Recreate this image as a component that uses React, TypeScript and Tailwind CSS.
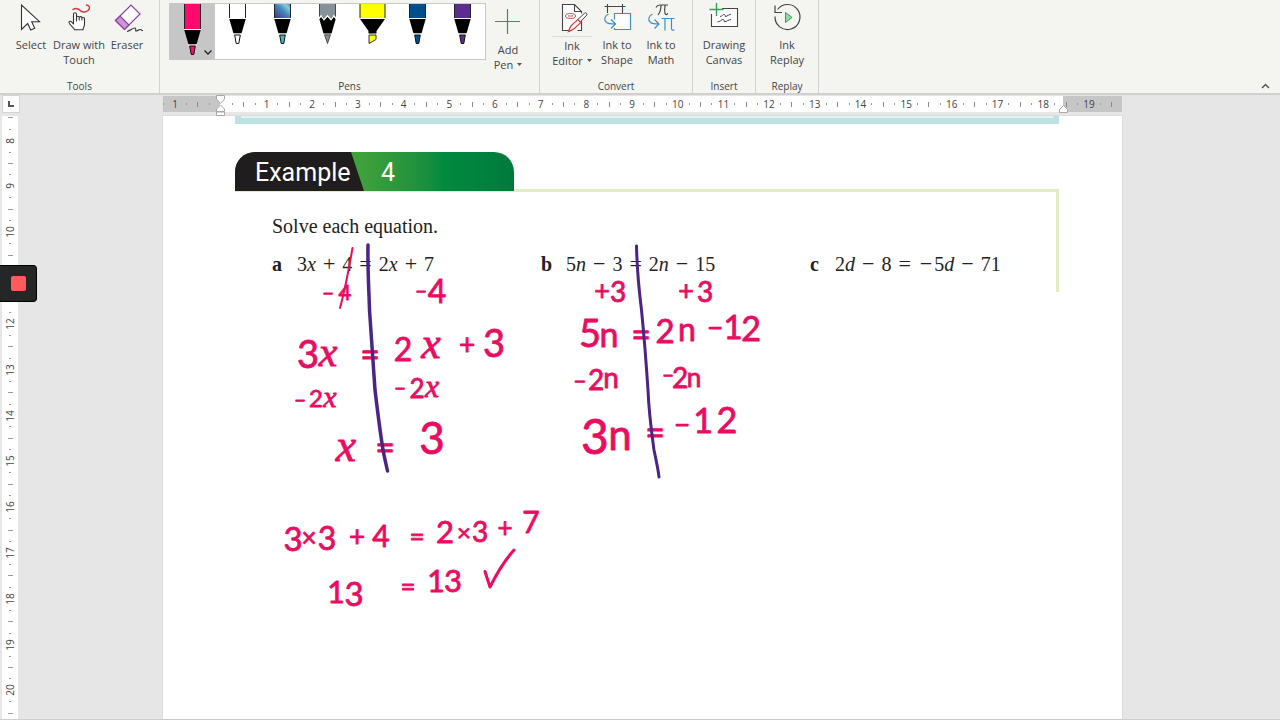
import type { ReactNode } from 'react';
import { clsx } from 'clsx';

const INK = '#e90c61';
const PURPLE = '#4b2488';

type Pen = {
  name: string;
  color: string;
  kind: 'pen' | 'pencil' | 'highlighter';
  selected?: boolean;
};

const pens: Pen[] = [
  { name: 'Pink pen', color: '#ff0a6c', kind: 'pen', selected: true },
  { name: 'White pen', color: '#ffffff', kind: 'pen' },
  { name: 'Galaxy pen', color: 'url(#galaxy)', kind: 'pen' },
  { name: 'Pencil', color: '#869297', kind: 'pencil' },
  { name: 'Highlighter', color: '#ffff00', kind: 'highlighter' },
  { name: 'Blue pen', color: '#004f8b', kind: 'pen' },
  { name: 'Purple pen', color: '#5b2d90', kind: 'pen' },
];

function PenDrawing({ pen }: { pen: Pen }) {
  const drop = pen.selected ? 11 : 0;
  return (
    <svg width="45" height="55" viewBox="0 0 45 55" aria-hidden="true">
      <defs>
        <linearGradient id="galaxy" x1="0" y1="1" x2="1" y2="0">
          <stop offset="0" stopColor="#3b3480" />
          <stop offset="0.5" stopColor="#4b86bd" />
          <stop offset="0.75" stopColor="#7fd0d8" />
          <stop offset="1" stopColor="#6a4a9c" />
        </linearGradient>
      </defs>
      {pen.kind === 'pen' && (
        <>
          <rect x="14" y="-2" width="17" height={16 + drop} fill={pen.color} />
          <path d={`M14.5 0V${14 + drop}M30.5 0V${14 + drop}`} stroke="#222" strokeWidth="1" />
          <g transform={`translate(0 ${drop})`}>
            <path d="M14 14.5h17" stroke="#fff" strokeWidth="1" />
            <path d="M14.3 15h16.4L26.5 29.5h-8z" fill="#000" />
            <path d="M18 30h9" stroke="#fff" strokeWidth="1" />
            <path
              d="M19.7 31h5.6l-1.5 8.5h-2.6z"
              fill={pen.color === 'url(#galaxy)' ? '#4fb0c0' : pen.color}
              stroke="#111"
              strokeWidth="1"
            />
          </g>
          {pen.selected && <path d="M34.5 46.5l3.5 3.5 3.5-3.5" fill="none" stroke="#222" strokeWidth="1.3" />}
        </>
      )}
      {pen.kind === 'pencil' && (
        <>
          <path d="M14 0h17v14l-4.5 15.5h-8L14 14z" fill="#000" />
          <path d="M14.5 0h16v15l-2.6-3-2.7 3.5-2.7-3.5-2.7 3.5-2.7-3.5-2.6 3z" fill="#869297" />
          <path d="M13.5 15l2.6-3.2 2.9 4 3.5-4 3.5 4 2.9-4 2.6 3.2" fill="none" stroke="#fff" strokeWidth="1.3" />
          <path d="M19.5 30.8h6l-3 8.7z" fill="#8d8d8d" stroke="#333" strokeWidth="0.8" />
        </>
      )}
      {pen.kind === 'highlighter' && (
        <>
          <rect x="10" y="-2" width="25" height="16" fill="#ff0" />
          <path d="M10 0v14M35 0v14" stroke="#222" strokeWidth="1" />
          <path d="M10 15h25l-8.5 12v2.500h-8V27z" fill="#000" />
          <path d="M19 31h7v4.500l-7 4z" fill="#ff0" stroke="#222" strokeWidth="0.9" />
        </>
      )}
    </svg>
  );
}

function RibbonGroup({ label, className, children }: { label: string; className?: string; children: ReactNode }) {
  return (
    <section aria-label={label} className="flex shrink-0 flex-col justify-between border-r border-[#d2d2d0]">
      <div className={clsx('flex items-start', className)}>{children}</div>
      <p className="text-center text-[10px] leading-[14px] text-[#444]">{label}</p>
    </section>
  );
}

function RibbonButton({ lines, menu, className, children }: { lines: string[]; menu?: boolean; className?: string; children: ReactNode }) {
  return (
    <button type="button" className={clsx('flex shrink-0 flex-col items-center text-[11px] leading-[15px] text-[#444]', className)}>
      {children}
      {lines.map((line, i) => (
        <span key={line} className="flex items-center gap-1 whitespace-nowrap">
          {line}
          {menu && i === lines.length - 1 && (
            <svg width="5" height="3" viewBox="0 0 5 3" aria-hidden="true">
              <path d="M0 0h5L2.5 3z" fill="#555" />
            </svg>
          )}
        </span>
      ))}
    </button>
  );
}

function SelectIcon() {
  return (
    <svg width="48" height="37" viewBox="7 0 48 37" fill="none" aria-hidden="true">
      <path d="M21.5 5v24.500l6.200-6 3 6.500 4-1.800-3-6.500h7.800z" fill="#fff" stroke="#333" strokeWidth="1.1" />
    </svg>
  );
}

function TouchIcon() {
  return (
    <svg width="48" height="37" viewBox="55 0 48 37" fill="none" strokeLinecap="round" strokeLinejoin="round" aria-hidden="true">
      <path d="M73 9.500c3-2 5-1 7 .8 2.500 2 5.500 2.200 8 .2 2.500-2.200 2-5-1.500-5.500" stroke="#d8363b" strokeWidth="1.5" />
      <path
        d="M73.500 24V14.500c0-2.300 3-2.300 3 0V21v-3.500c0-1.700 2.700-1.700 2.700 0V20v-2.200c0-1.700 2.700-1.500 2.700.2V20v-1.500c0-1.500 2.600-1.500 2.600.5v5.500c0 2-1.500 3-1.500 5.300h-8.500c0-2-5-4.500-5.500-7.300-.2-1.400 1.700-1.800 2.600-.6z"
        fill="#fff"
        stroke="#333"
        strokeWidth="1.1"
      />
    </svg>
  );
}

function EraserIcon() {
  return (
    <svg width="48" height="37" viewBox="103 0 48 37" fill="none" aria-hidden="true">
      <path d="M115.500 20.500L131 5l9 9-15.500 15.500z" fill="#fff" stroke="#8a3f9e" strokeWidth="1.2" />
      <path d="M115.500 20.500l4.500-4.500 9 9-4.500 4.500z" fill="#cf94d8" stroke="#8a3f9e" strokeWidth="1.2" />
      <path d="M127 31.500c3-.5 6-4 8-3.500s-.5 3.300 1.500 3 2.500-2 4-1.500 1 1 2.500 1" stroke="#333" strokeWidth="1.1" />
    </svg>
  );
}

function PlusIcon() {
  return (
    <svg width="44" height="42" viewBox="0 0 44 42" aria-hidden="true">
      <path d="M21.500 9v25M9 21.500h25" stroke="#3c8f5c" strokeWidth="1.2" />
    </svg>
  );
}

function InkEditorIcon() {
  return (
    <svg width="44" height="36" viewBox="550 0 44 36" fill="none" aria-hidden="true">
      <path d="M562.500 4.500h12l7 7v19h-19z" fill="#fff" />
      <path d="M569 30.500h-6.500v-26h12l7 7v2M574.500 4.500v7h7M581.500 21v9.500h-4" stroke="#444" strokeWidth="1.1" />
      <ellipse cx="570.5" cy="16" rx="5" ry="2.5" stroke="#d94a4a" />
      <path d="M568 16h5" stroke="#d94a4a" />
      <path d="M568.500 31.500l2.300-5.500 14-13c1-.7 2.800.8 2 2l-13 14z" fill="#fff" stroke="#444" />
      <path d="M568.500 31.500l2.300-5.500 7-6.500 3 3-7 6.500z" fill="#fff" stroke="#e03b3b" strokeWidth="1.2" />
    </svg>
  );
}

function InkShapeIcon() {
  return (
    <svg width="44" height="37" viewBox="595 0 44 37" fill="none" aria-hidden="true">
      <path d="M607.500 4v9M622.500 4v9M604.500 6.500h21" stroke="#444" strokeWidth="1.1" />
      <path d="M614.500 13.500h16v16h-16V20z" fill="#fff" />
      <path d="M614.500 19.500v-6h16v16h-16v-1.500" stroke="#3d8fc9" strokeWidth="1.2" />
      <path d="M608.500 14c-4 2-5 6-2 8.500 2 1.500 5 1.500 9 1.500M611 19.500l4.500 4.500-4.500 4.500" stroke="#3d8fc9" strokeWidth="1.2" />
    </svg>
  );
}

function InkMathIcon() {
  return (
    <svg width="44" height="37" viewBox="639 0 44 37" fill="none" aria-hidden="true">
      <path d="M656 7.500c1-2 2-2.500 4-2.500h8M661 5.500c0 4-1 7-3 9.500M665 5.500c-.5 5-1 8.500 1 9 .8.200 1.500-.500 1.800-1.200" stroke="#444" strokeWidth="1.2" />
      <path d="M652.500 14c-4 2-5 6-2 8.500 2 1.500 4 1.500 8 1.500M654.500 19.500L659 24l-4.500 4.500" stroke="#3d8fc9" strokeWidth="1.2" />
      <path d="M661.500 18.500h13M665 18.500v12M671.500 18.500v10c0 1.500 1 2 3 1.500" stroke="#3d8fc9" strokeWidth="1.2" />
    </svg>
  );
}

function CanvasIcon() {
  return (
    <svg width="62" height="37" viewBox="693 0 62 37" fill="none" aria-hidden="true">
      <path d="M711.500 8.500h26v18h-26z" fill="#fff" />
      <path d="M722 8.500h15.500v18h-26V14" stroke="#444" strokeWidth="1.1" />
      <path d="M716.500 3v13M709.500 9.500h14" stroke="#35a055" strokeWidth="1.4" />
      <path d="M720 16.500c2 0 3-2.500 4.500-2s0 2.500 1.500 2 3-2 5-2.500M717.500 22c2 0 4.500-3 6-2.500s-.5 2.500 1.500 2.200 3.500-2 6-2.200" stroke="#444" />
    </svg>
  );
}

function ReplayIcon() {
  return (
    <svg width="62" height="37" viewBox="756 0 62 37" fill="none" aria-hidden="true">
      <path d="M777.500 9.500a12.500 12.500 0 1 1-2.500 7" stroke="#444" strokeWidth="1.2" />
      <path d="M775 5.500v7h7" stroke="#444" strokeWidth="1.2" />
      <path d="M785.500 12.500l6.500 5-6.500 5z" fill="#8fdca8" stroke="#35a055" />
    </svg>
  );
}

function Ribbon() {
  return (
    <header className="flex h-[95px] shrink-0 overflow-hidden border-b-2 border-[#d0d0ce] bg-[#f4f5f1]">
      <RibbonGroup label="Tools" className="pl-[7px] pr-2">
        <RibbonButton lines={['Select']} className="w-12"><SelectIcon /></RibbonButton>
        <RibbonButton lines={['Draw with', 'Touch']} className="w-12"><TouchIcon /></RibbonButton>
        <RibbonButton lines={['Eraser']} className="w-12"><EraserIcon /></RibbonButton>
      </RibbonGroup>
      <RibbonGroup label="Pens" className="px-[9px]">
        <div className="mt-[3px] flex border border-[#c8c8c8] bg-white">
          {pens.map((pen) => (
            <button key={pen.name} type="button" aria-label={pen.name} className={clsx(pen.selected && 'bg-[#c6c6c6]')}>
              <PenDrawing pen={pen} />
            </button>
          ))}
        </div>
        <RibbonButton lines={['Add', 'Pen']} menu className="w-11"><PlusIcon /></RibbonButton>
      </RibbonGroup>
      <RibbonGroup label="Convert" className="pl-[10px] pr-[9px]">
        <RibbonButton lines={['Ink', 'Editor']} menu className="mr-px w-11">
          <InkEditorIcon />
          <span className="mb-px h-px w-10 bg-[#dcdcda]" />
        </RibbonButton>
        <RibbonButton lines={['Ink to', 'Shape']} className="w-11"><InkShapeIcon /></RibbonButton>
        <RibbonButton lines={['Ink to', 'Math']} className="w-11"><InkMathIcon /></RibbonButton>
      </RibbonGroup>
      <RibbonGroup label="Insert">
        <RibbonButton lines={['Drawing', 'Canvas']}><CanvasIcon /></RibbonButton>
      </RibbonGroup>
      <RibbonGroup label="Replay">
        <RibbonButton lines={['Ink', 'Replay']}><ReplayIcon /></RibbonButton>
      </RibbonGroup>
      <button type="button" aria-label="Collapse the ribbon" className="mb-0.5 ml-auto mr-2 self-end p-0.5">
        <svg width="9" height="6" viewBox="0 0 9 6" fill="none" aria-hidden="true">
          <path d="M1 5l3.500-3.500L8 5" stroke="#555" strokeWidth="1.5" />
        </svg>
      </button>
    </header>
  );
}

function HorizontalRuler() {
  const slots = Array.from({ length: 85 }, (_, i) => i);
  return (
    <div className="relative h-4 w-full bg-white">
      <div className="absolute inset-y-0 left-0 w-[57px] bg-[#c6c6c6]" />
      <div className="absolute inset-y-0 right-0 w-[59px] bg-[#c6c6c6]" />
      <div className="relative h-full overflow-hidden">
        <div className="-ml-[5px] -mr-[7px] flex h-full items-center">
          {slots.map((i) => (
            <div key={i} className="flex min-w-0 flex-1 justify-center">
              {i % 4 === 1 && i !== 5 && <span className="text-[10px] leading-4 text-[#444]">{Math.abs((i - 5) / 4)}</span>}
              {i % 4 === 3 && <span className="h-[5px] w-px bg-[#8a8a8a]" />}
              {i % 2 === 0 && <span className="h-0.5 w-px bg-[#9a9a9a]" />}
            </div>
          ))}
        </div>
      </div>
      <svg className="absolute -top-px left-[53px]" width="9" height="22" viewBox="0 0 9 22" fill="#fff" stroke="#a8a8a8" aria-hidden="true">
        <path d="M.5.5h8v3.500l-4 4.500-4-4.500z" />
        <path d="M4.500 10l4 4v2.500h-8V14zM.5 17h8v3.500h-8z" />
      </svg>
      <svg className="absolute right-[54px] top-[9px]" width="9" height="8" viewBox="0 0 9 8" fill="#fff" stroke="#a8a8a8" aria-hidden="true">
        <path d="M4.500.5l4 4v3h-8v-3z" />
      </svg>
    </div>
  );
}

function VerticalRuler() {
  const slots = Array.from({ length: 53 }, (_, i) => i);
  return (
    <div className="flex w-6 shrink-0 flex-col pl-0.5">
      <button type="button" aria-label="Tab selector" className="flex h-[18px] w-[18px] items-center justify-center border border-[#d4d4d4] bg-[#fdfdfd]">
        <span className="h-[6px] w-[6px] border-b-2 border-l-2 border-[#555]" />
      </button>
      <div className="mt-[3px] min-h-0 w-4 flex-1 overflow-hidden bg-white">
        <div className="-mt-1 flex h-[calc(100%+4px)] flex-col">
          {slots.map((i) => (
            <div key={i} className="flex min-h-0 flex-1 items-center justify-center">
              {i % 4 === 0 && <span className="h-px w-[5px] bg-[#9a9a9a]" />}
              {i % 4 === 2 && <span className="-rotate-90 text-[10px] leading-4 text-[#444]">{8 + (i - 2) / 4}</span>}
              {i % 2 === 1 && <span className="h-px w-0.5 bg-[#9a9a9a]" />}
            </div>
          ))}
        </div>
      </div>
    </div>
  );
}

type Mark = [text: string, x: number, y: number, size: number];

// Each mark is [text, centre x, baseline y, size]
const marks: Mark[] = [
  ['−', 328, 300, 20], ['4', 345, 300, 22],
  ['−', 421, 298, 20], ['4', 437, 303, 32],
  ['3', 308, 368, 38], ['x', 328, 366, 42], ['=', 370, 367, 34],
  ['2', 403, 361, 32], ['x', 431, 358, 44], ['+', 467, 355, 28], ['3', 494, 357, 38],
  ['−', 300, 407, 20], ['2', 316, 407, 24], ['x', 330, 407, 30],
  ['−', 400, 395, 20], ['2', 417, 398, 26], ['x', 432, 397, 32],
  ['x', 346, 461, 46], ['=', 385, 460, 34], ['3', 432, 454, 44],
  ['+', 602, 300, 27], ['3', 618, 302, 28],
  ['+', 686, 300, 27], ['3', 705, 302, 28],
  ['5', 590, 347, 38], ['n', 609, 347, 34], ['=', 641, 347, 34],
  ['2', 665, 343, 33], ['n', 687, 341, 32], ['−', 715, 338, 28], ['1', 733, 339, 33], ['2', 751, 341, 34],
  ['−', 580, 389, 22], ['2', 596, 390, 28], ['n', 611, 388, 28],
  ['−', 668, 382, 20], ['2', 680, 388, 28], ['n', 694, 387, 26],
  ['3', 595, 454, 48], ['n', 620, 450, 42], ['=', 655, 445, 34],
  ['−', 682, 435, 28], ['1', 703, 433, 34], ['2', 727, 433, 36],
  ['3', 293, 551, 33], ['×', 309, 547, 26], ['3', 327, 550, 32], ['+', 357, 547, 28], ['4', 381, 547, 30],
  ['=', 417, 546, 26], ['2', 445, 543, 31], ['×', 464, 541, 24], ['3', 480, 542, 28], ['+', 505, 537, 26], ['7', 531, 533, 30],
  ['1', 336, 603, 30], ['3', 354, 606, 33], ['=', 408, 596, 26], ['1', 436, 592, 30], ['3', 453, 592, 31],
];

function InkLayer() {
  return (
    <svg className="pointer-events-none absolute left-0 top-0" width="959" height="600" viewBox="163 116 959 600" fill="none" strokeLinecap="round" strokeLinejoin="round">
      <g fill={INK} stroke={INK} strokeWidth="0.8" textAnchor="middle">
        {marks.map(([text, x, y, size]) => (
          <text
            key={`${x}-${y}`}
            x={x}
            y={y}
            fontSize={size}
            className={text === 'x' ? "font-['Liberation_Serif',serif] italic" : 'font-[Lato,sans-serif]'}
          >
            {text}
          </text>
        ))}
      </g>
      <path d="M352.500 248C350 262 348 274 345 287C343 296 342 301 340 308" stroke={INK} strokeWidth="2" />
      <path d="M485 571.500L490 587C497 573 505 560 514 550" stroke={INK} strokeWidth="3" />
      <path d="M368 245C367.500 270 369 290 369.500 310C371 335 373 360 375 390C378 415 381 440 384 455L387.500 471" stroke={PURPLE} strokeWidth="3.5" />
      <path d="M636.500 246C637 270 639 290 641.500 310C644 335 646 360 648 390C649 415 652 435 654 450C656 460 658 468 659 477" stroke={PURPLE} strokeWidth="3" />
    </svg>
  );
}

function Op({ children }: { children: string }) {
  return <span className="px-0.5 text-[22px] leading-none">{children}</span>;
}

function Question({ letter, children }: { letter: string; children: ReactNode }) {
  return (
    <li className="flex items-baseline whitespace-nowrap">
      <b className="w-[25px] shrink-0">{letter}</b>
      <span>{children}</span>
    </li>
  );
}

function DocumentPage() {
  return (
    <article className="relative min-h-0 w-full flex-1 overflow-hidden bg-white pl-[72px] pr-[63px] shadow-[0_0_1px_#aaa]">
      <div className="h-2 border-x-[6px] border-b-[6px] border-[#bde3e1] bg-[#e3f3f2]" />
      <div className="relative mt-7 flex h-[39px] w-[279px] overflow-hidden rounded-tl-[20px] rounded-tr-[20px] bg-linear-to-r from-[#3fa13a] from-45% via-[#008a3f] via-75% to-[#007a3c] font-[Roboto,sans-serif] text-[25px] leading-[42px] text-white">
        <h2 className="w-[129px] bg-[#1f1d1d] pl-5 [clip-path:polygon(0_0,116px_0,100%_100%,0_100%)]">Example</h2>
        <span className="pl-[17px]">4</span>
      </div>
      <div className="-mt-0.5 h-[103px] border-r-3 border-t-3 border-[#e1edc3] pl-[37px] pt-[22px] font-['Liberation_Serif',serif] text-[20px] leading-6 text-[#222]">
        <p>Solve each equation.</p>
        <ol className="-mr-[23px] mt-[14px] grid grid-cols-3">
          <Question letter="a">3<i>x</i> <Op>+</Op> 4 <Op>=</Op> 2<i>x</i> <Op>+</Op> 7</Question>
          <Question letter="b">5<i>n</i> <Op>−</Op> 3 <Op>=</Op> 2<i>n</i> <Op>−</Op> 15</Question>
          <Question letter="c">2<i>d</i> <Op>−</Op> 8 <Op>=</Op> <Op>−</Op>5<i>d</i> <Op>−</Op> 71</Question>
        </ol>
      </div>
      <InkLayer />
    </article>
  );
}

export default function App() {
  return (
    <div className="relative flex h-screen flex-col overflow-hidden bg-[#e6e6e6] font-['Open_Sans',sans-serif]">
      <Ribbon />
      <main className="flex min-h-0 flex-1 border-b border-[#cfcfcf]">
        <VerticalRuler />
        <div className="flex min-w-0 flex-1 justify-center pr-[19px]">
          <div className="flex w-full max-w-[959px] flex-col gap-1 pt-px">
            <HorizontalRuler />
            <DocumentPage />
          </div>
        </div>
      </main>
      <button type="button" aria-label="Stop recording" className="absolute left-0 top-[265px] flex h-[37px] w-[37px] items-center rounded-r border border-l-0 border-black bg-[#252726] pl-[11px]">
        <span className="h-[15px] w-[15px] rounded-xs bg-[#ff5a5c]" />
      </button>
    </div>
  );
}
